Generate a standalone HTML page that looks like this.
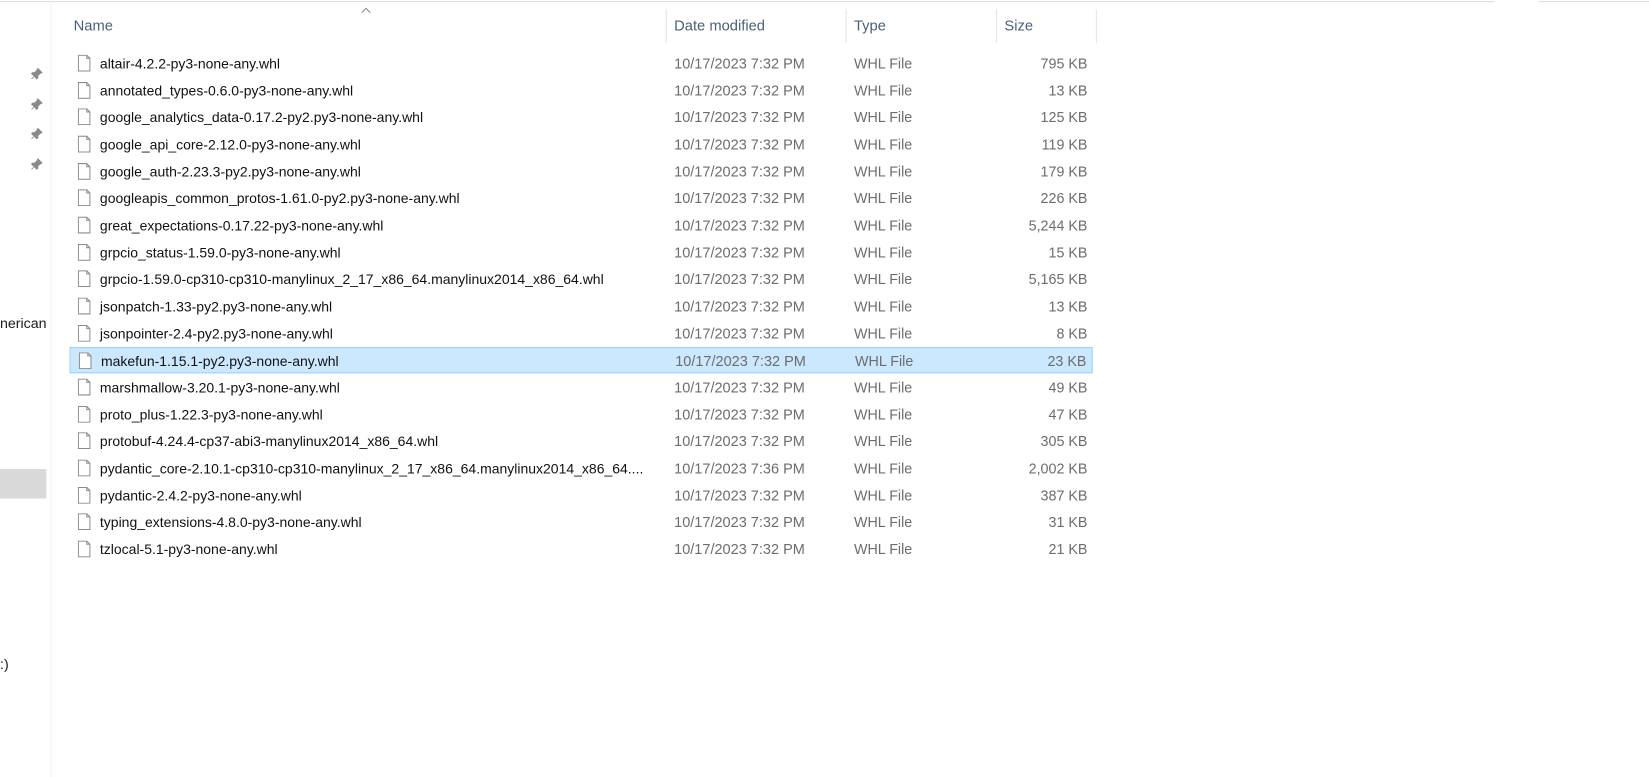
<!DOCTYPE html>
<html><head><meta charset="utf-8"><style>
*{margin:0;padding:0;box-sizing:border-box}
body{width:1649px;height:739px;background:#fff;font-family:"Liberation Sans",sans-serif;color:#1a1a1a;position:relative;overflow:hidden}
#w{position:absolute;left:0;top:0;width:1568px;height:703px;transform:scale(1.0517);transform-origin:0 0}
.a{position:absolute;white-space:nowrap}
.hl{top:1px;height:1px;background:#dcdcdc}
.hdr{top:12px;height:25px;line-height:25px;color:#4c607a;font-size:14px}
.vd{top:9px;width:1px;height:32px;background:#e5e5e5}
.row{position:absolute;left:66px;width:973px;height:25px;line-height:25px;font-size:13.3px}
.row.sel{background:#cce8ff;border:1px solid #99d1ff}
.row span{position:absolute;top:0}
.n{left:29px;color:#111}
.d{left:575px;color:#6d6d6d;font-size:13.8px}
.t{left:746px;color:#6d6d6d;font-size:13.6px}
.s{right:5px;color:#6d6d6d;font-size:13.6px}
.ic{position:absolute;left:8px;top:4px;width:12px;height:16px}
.pin{position:absolute;left:29px;width:12px;height:12px}
</style></head><body><div id="w">
<div class="a hl" style="left:0;width:1421px"></div>
<div class="a hl" style="left:1463px;width:186px"></div>
<div class="a" style="left:48px;top:0;width:1px;height:739px;background:#f0f0f0"></div>
<div class="a" style="left:0;top:446px;width:44px;height:28px;background:#d9d9d9"></div>
<div class="a" style="left:0;top:300px;font-size:13.5px">nerican</div>
<div class="a" style="left:0;top:624px;font-size:13.5px">:)</div>
<svg class="pin" style="top:64px" viewBox="0 0 12 12"><path d="M7 1l4 4-2 1-2 2v2L6 11 1 6l1-1h2l2-2 1-2z M3 9l-2 2" fill="#8a8a8a" stroke="#8a8a8a" stroke-width="0.8"/></svg>
<svg class="pin" style="top:93px" viewBox="0 0 12 12"><path d="M7 1l4 4-2 1-2 2v2L6 11 1 6l1-1h2l2-2 1-2z M3 9l-2 2" fill="#8a8a8a" stroke="#8a8a8a" stroke-width="0.8"/></svg>
<svg class="pin" style="top:121px" viewBox="0 0 12 12"><path d="M7 1l4 4-2 1-2 2v2L6 11 1 6l1-1h2l2-2 1-2z M3 9l-2 2" fill="#8a8a8a" stroke="#8a8a8a" stroke-width="0.8"/></svg>
<svg class="pin" style="top:150px" viewBox="0 0 12 12"><path d="M7 1l4 4-2 1-2 2v2L6 11 1 6l1-1h2l2-2 1-2z M3 9l-2 2" fill="#8a8a8a" stroke="#8a8a8a" stroke-width="0.8"/></svg>
<svg class="a" style="left:343px;top:7px" width="10" height="6" viewBox="0 0 10 6"><path d="M1 5L5 1l4 4" fill="none" stroke="#888" stroke-width="1"/></svg>
<div class="a hdr" style="left:70px">Name</div>
<div class="a hdr" style="left:641px">Date modified</div>
<div class="a hdr" style="left:812px">Type</div>
<div class="a hdr" style="left:955px">Size</div>
<div class="a vd" style="left:633px"></div>
<div class="a vd" style="left:804px"></div>
<div class="a vd" style="left:947px"></div>
<div class="a vd" style="left:1042px"></div>
<div id="rows"></div>
</div>
<script>
var f=[["altair-4.2.2-py3-none-any.whl","7:32","795 KB"],["annotated_types-0.6.0-py3-none-any.whl","7:32","13 KB"],["google_analytics_data-0.17.2-py2.py3-none-any.whl","7:32","125 KB"],["google_api_core-2.12.0-py3-none-any.whl","7:32","119 KB"],["google_auth-2.23.3-py2.py3-none-any.whl","7:32","179 KB"],["googleapis_common_protos-1.61.0-py2.py3-none-any.whl","7:32","226 KB"],["great_expectations-0.17.22-py3-none-any.whl","7:32","5,244 KB"],["grpcio_status-1.59.0-py3-none-any.whl","7:32","15 KB"],["grpcio-1.59.0-cp310-cp310-manylinux_2_17_x86_64.manylinux2014_x86_64.whl","7:32","5,165 KB"],["jsonpatch-1.33-py2.py3-none-any.whl","7:32","13 KB"],["jsonpointer-2.4-py2.py3-none-any.whl","7:32","8 KB"],["makefun-1.15.1-py2.py3-none-any.whl","7:32","23 KB"],["marshmallow-3.20.1-py3-none-any.whl","7:32","49 KB"],["proto_plus-1.22.3-py3-none-any.whl","7:32","47 KB"],["protobuf-4.24.4-cp37-abi3-manylinux2014_x86_64.whl","7:32","305 KB"],["pydantic_core-2.10.1-cp310-cp310-manylinux_2_17_x86_64.manylinux2014_x86_64....","7:36","2,002 KB"],["pydantic-2.4.2-py3-none-any.whl","7:32","387 KB"],["typing_extensions-4.8.0-py3-none-any.whl","7:32","31 KB"],["tzlocal-5.1-py3-none-any.whl","7:32","21 KB"]];
var h="";
f.forEach(function(r,i){var top=Math.round(48+i*25.67);
h+='<div class="row'+(i==11?' sel':'')+'" style="top:'+top+'px"><svg class="ic" viewBox="0 0 12 16"><path d="M0.5 0.5h8l3 3v12h-11z" fill="#fff" stroke="#8c8c8c"/><path d="M8.5 0.5v3h3" fill="none" stroke="#8c8c8c"/></svg><span class="n">'+r[0]+'</span><span class="d">10/17/2023 '+r[1]+' PM</span><span class="t">WHL File</span><span class="s">'+r[2]+'</span></div>';});
document.getElementById("rows").innerHTML=h;
</script>
</body></html>
